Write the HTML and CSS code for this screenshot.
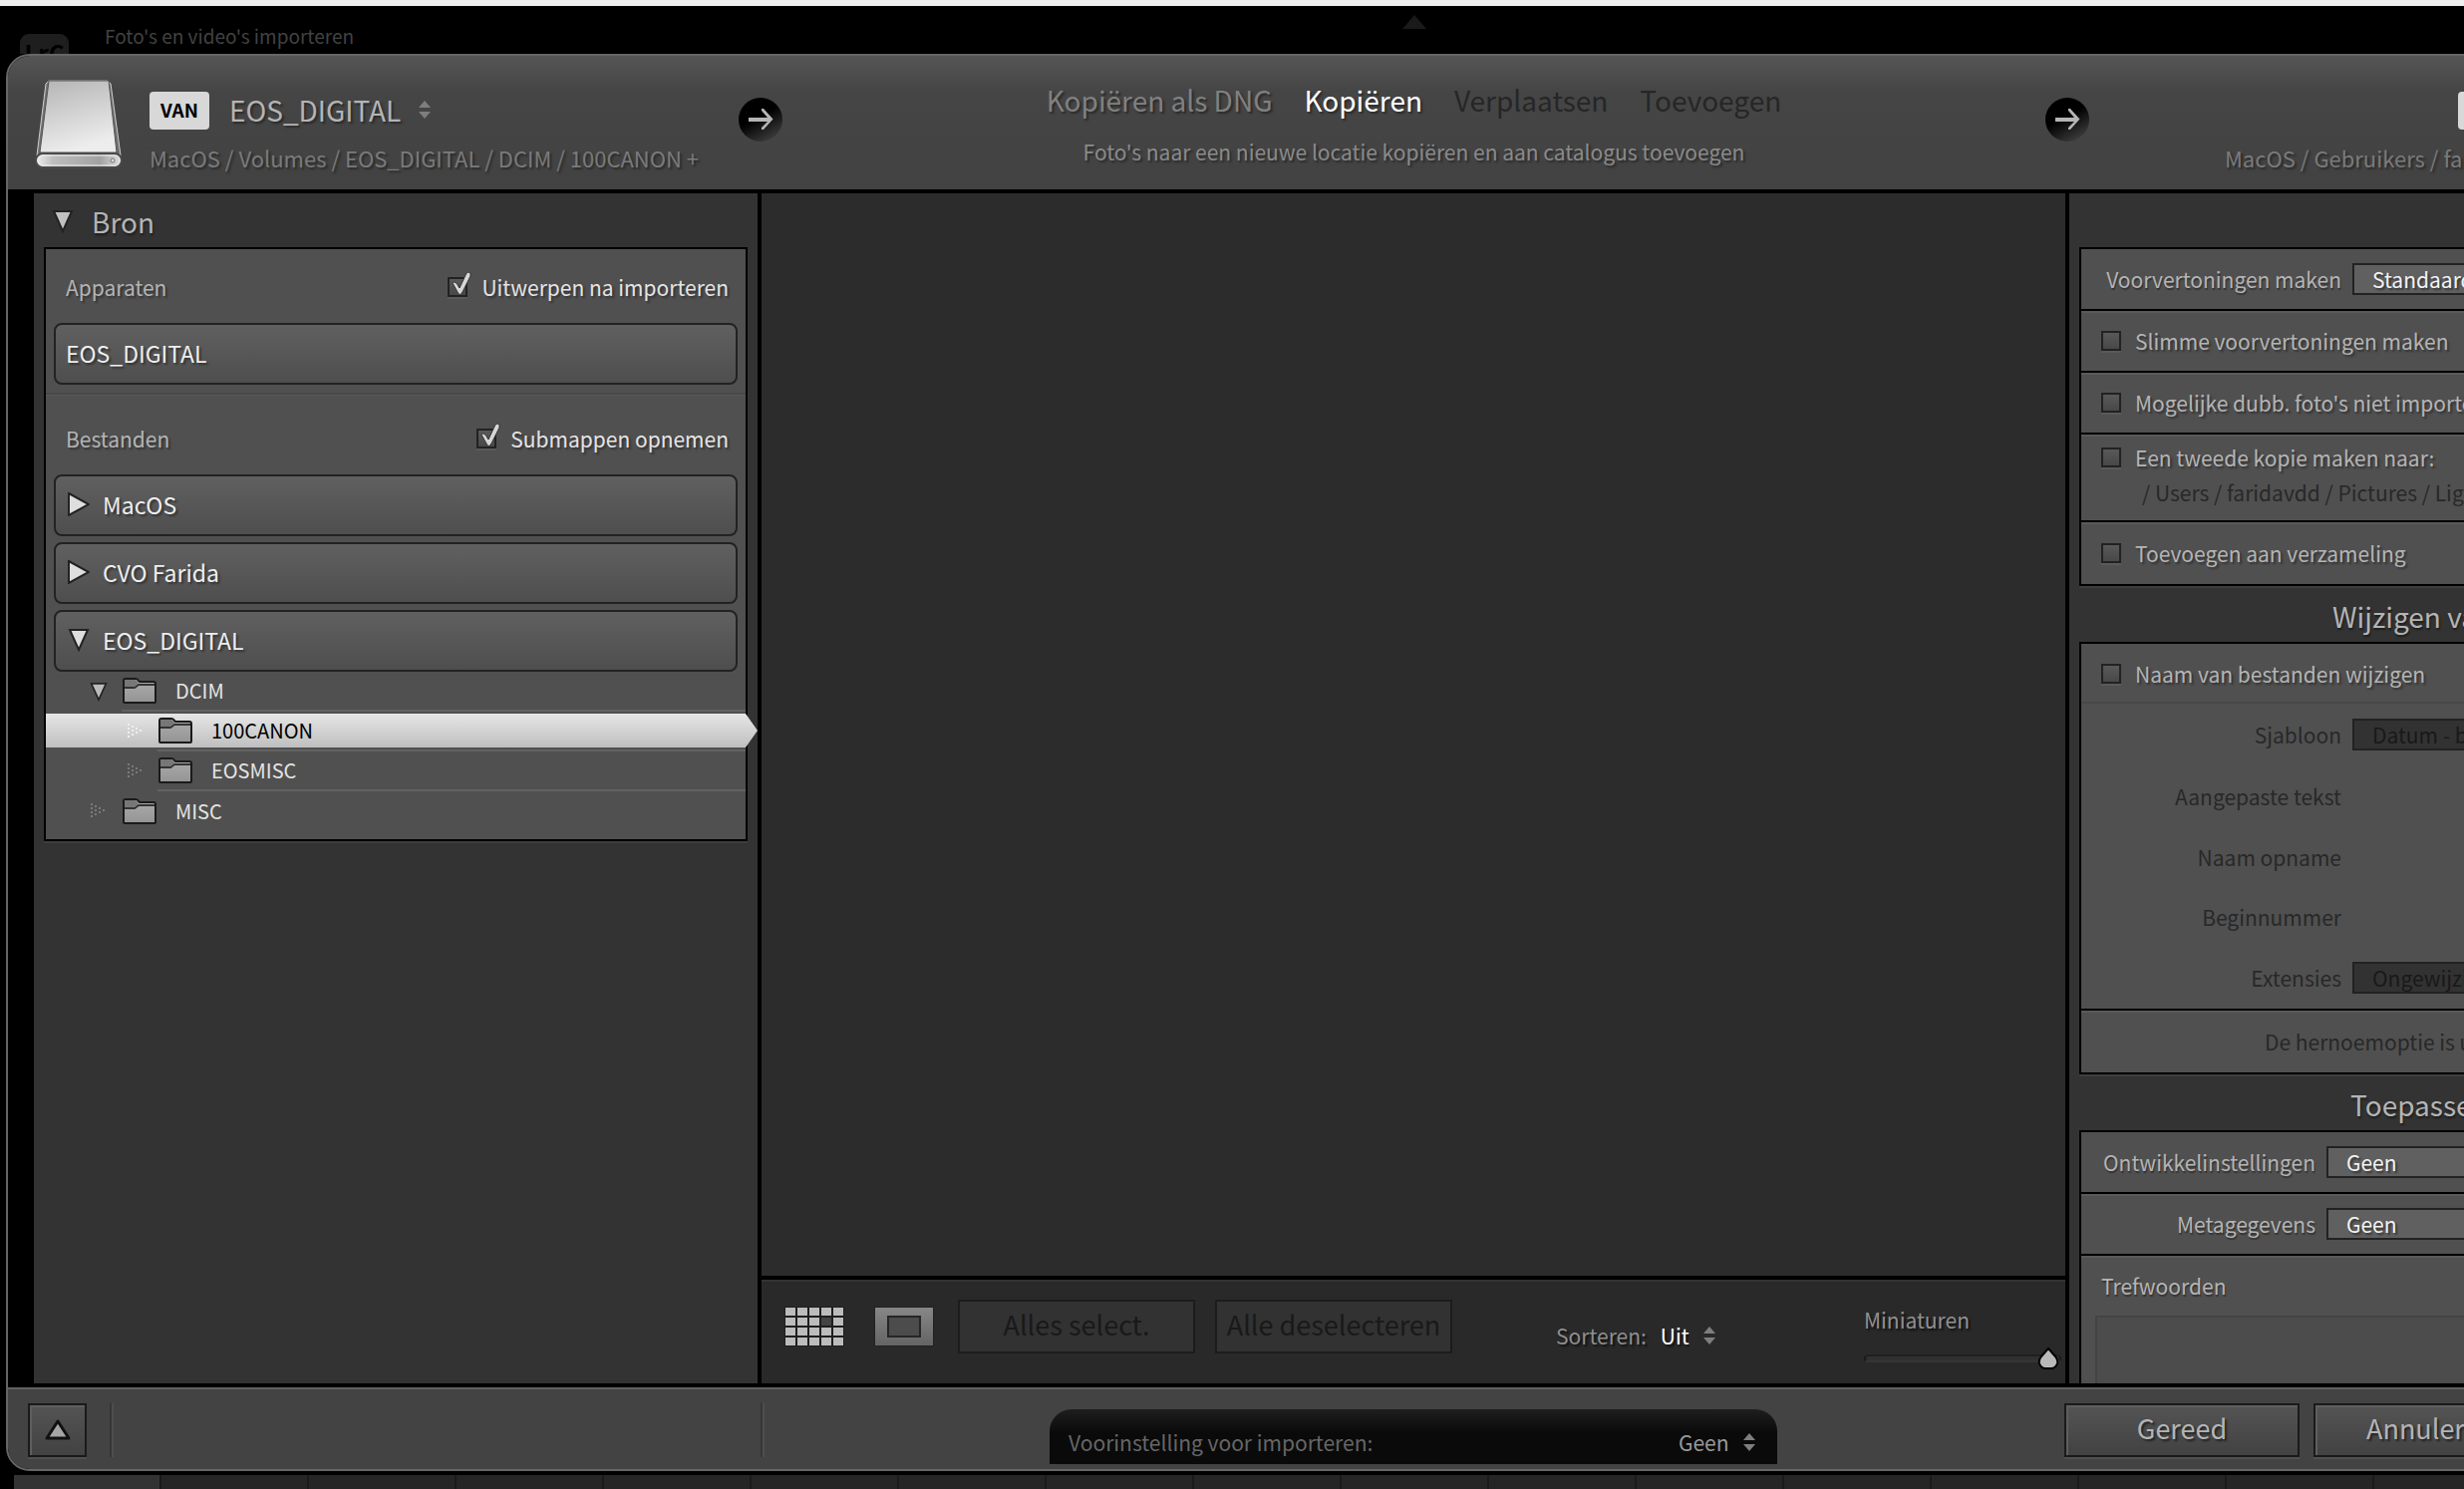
FILE: index.html
```html
<!DOCTYPE html>
<html lang="nl">
<head>
<meta charset="utf-8">
<meta name="viewport" content="width=device-width, initial-scale=1">
<title>Foto's en video's importeren</title>
<link rel="stylesheet" href="styles.css">
</head>
<body>
<svg class="defs" aria-hidden="true">
  <defs>
    <linearGradient id="driveTop" x1="0" y1="0" x2="0.3" y2="1"><stop offset="0" stop-color="#b4b4b4"/><stop offset="1" stop-color="#ededed"/></linearGradient>
    <linearGradient id="driveFront" x1="0" y1="0" x2="1" y2="0"><stop offset="0" stop-color="#efefef"/><stop offset="0.2" stop-color="#bdbdbd"/><stop offset="0.75" stop-color="#a2a2a2"/><stop offset="1" stop-color="#e0e0e0"/></linearGradient>
    <linearGradient id="disc" x1="0.3" y1="0.2" x2="0.75" y2="1"><stop offset="0.3" stop-color="#000"/><stop offset="1" stop-color="#404040"/></linearGradient>
    <linearGradient id="folderFill" x1="0" y1="0" x2="0" y2="1"><stop offset="0" stop-color="#adadad"/><stop offset="1" stop-color="#949494"/></linearGradient>
    <linearGradient id="loupeFill" x1="0" y1="0" x2="0" y2="1"><stop offset="0" stop-color="#878787"/><stop offset="1" stop-color="#646464"/></linearGradient>
    <symbol id="updown" viewBox="0 0 12 18"><path d="M6 0l6 7H0zM6 18l6-7H0z"/></symbol>
    <symbol id="arrow" viewBox="0 0 44 44"><circle cx="22" cy="22" r="22" fill="url(#disc)"/><path d="M10 20h19l-6-7v-2l2 0 9.500 10.500-9.500 10.500h-2v-2l6-6H10z" fill="#b5b5b5"/></symbol>
    <symbol id="folder" viewBox="0 0 36 28"><path d="M2 25V4q0-2 2-2h10q2 0 3 2l1 1h14q2 0 2 2v18q0 1-1 1H3q-1 0-1-1z" fill="url(#folderFill)" stroke="#1a1a1a" stroke-width="2"/><path d="M3 11h10l4-3h16" fill="none" stroke="#333" stroke-width="2"/><path d="M3 10V4q0-1 1-1h9q2 0 3 2l1 2-5 3z" fill="#777"/></symbol>
    <symbol id="dots" viewBox="0 0 14 16"><path d="M0 0h2v2H0zM0 4h2v2H0zM0 8h2v2H0zM0 12h2v2H0zM4 2h2v2H4zM4 6h2v2H4zM4 10h2v2H4zM8 4h2v2H8zM8 8h2v2H8zM12 6h2v2h-2z"/></symbol>
    <symbol id="tick" viewBox="0 0 20 24"><path d="M1 11q1-2 4 0l3 5L15 1q2-2 4 0v3L11 20q-3 5-5 0z" fill="#d6d6d6" stroke="#333"/></symbol>
    <symbol id="down" viewBox="0 0 22 24"><path d="M2 2h18L11 22z"/></symbol>
    <symbol id="right" viewBox="0 0 22 24"><path d="M1 1l20 11L1 23z"/></symbol>
  </defs>
</svg>

<div class="window-edge"></div>
<div class="titlebar">
  <div class="app-icon">LrC</div>
  <div class="window-title">Foto's en video's importeren</div>
  <svg class="panel-toggle" viewBox="0 0 24 14"><path d="M12 0l12 14H0z"/></svg>
</div>

<main class="dialog">
  <header class="header">
    <section class="source">
      <svg class="drive" viewBox="0 0 88 90">
        <path d="M11 4L14 1H73L76 4L86 76H2z" fill="#6f6f6f" stroke="#d0d0d0"/>
        <path d="M14 1H74L82 73H5z" fill="url(#driveTop)" stroke="#555"/>
        <rect x="1" y="74" width="86" height="14" rx="7" fill="url(#driveFront)" stroke="#4a4a4a" stroke-width="2"/>
        <rect x="3" y="76" width="82" height="10" rx="5" fill="none" stroke="#eee"/>
        <circle cx="78" cy="81" r="2" fill="#ddd" stroke="#777"/>
      </svg>
      <div class="source-text">
        <div class="source-name">
          <span class="badge">VAN</span>
          <button class="volume" type="button">EOS_DIGITAL<svg class="updown"><use href="#updown"/></svg></button>
        </div>
        <div class="path">MacOS / Volumes / EOS_DIGITAL / DCIM / 100CANON +</div>
      </div>
    </section>
    <svg class="arrow"><use href="#arrow"/></svg>
    <section class="method">
      <nav class="modes">
        <button type="button">Kopiëren als DNG</button>
        <button type="button" class="active">Kopiëren</button>
        <button type="button" disabled>Verplaatsen</button>
        <button type="button" disabled>Toevoegen</button>
      </nav>
      <p class="method-note">Foto's naar een nieuwe locatie kopiëren en aan catalogus toevoegen</p>
    </section>
    <svg class="arrow"><use href="#arrow"/></svg>
    <section class="destination">
      <span class="badge">NAAR</span>
      <div class="path">MacOS / Gebruikers / farida</div>
    </section>
  </header>

  <div class="columns">
    <aside class="left-panel">
      <button class="panel-heading" type="button"><svg class="tri"><use href="#down"/></svg>Bron</button>
      <div class="box source-box">
        <div class="group">
          <div class="group-head"><span>Apparaten</span>
            <label class="check bright"><span class="tickbox"><input type="checkbox" checked><svg><use href="#tick"/></svg></span>Uitwerpen na importeren</label>
          </div>
          <button class="volume-row" type="button">EOS_DIGITAL</button>
        </div>
        <div class="group files">
          <div class="group-head"><span>Bestanden</span>
            <label class="check bright"><span class="tickbox"><input type="checkbox" checked><svg><use href="#tick"/></svg></span>Submappen opnemen</label>
          </div>
          <button class="volume-row" type="button"><svg class="tri"><use href="#right"/></svg>MacOS</button>
          <button class="volume-row" type="button"><svg class="tri"><use href="#right"/></svg>CVO Farida</button>
          <button class="volume-row" type="button"><svg class="tri"><use href="#down"/></svg>EOS_DIGITAL</button>
        </div>
        <ul class="tree">
          <li class="node"><svg class="small-tri" viewBox="0 0 22 24"><use href="#down"/></svg><div class="node-body"><svg class="folder"><use href="#folder"/></svg>DCIM</div></li>
          <li class="node deep selected"><svg class="dots"><use href="#dots"/></svg><div class="node-body"><svg class="folder"><use href="#folder"/></svg>100CANON</div></li>
          <li class="node deep"><svg class="dots"><use href="#dots"/></svg><div class="node-body"><svg class="folder"><use href="#folder"/></svg>EOSMISC</div></li>
          <li class="node last"><svg class="dots"><use href="#dots"/></svg><div class="node-body"><svg class="folder"><use href="#folder"/></svg>MISC</div></li>
        </ul>
      </div>
    </aside>

    <section class="center">
      <div class="photos"></div>
      <div class="toolbar">
        <button class="view" type="button" aria-label="Raster">
          <svg viewBox="0 0 60 40"><rect width="60" height="40" fill="#1e1e1e"/><g fill="#bcbcbc"><path d="M1 1h10v8H1zM13 1h10v8H13zM25 1h10v8H25zM37 1h10v8H37zM49 1h10v8H49zM1 11h10v8H1zM13 11h10v8H13zM25 11h10v8H25zM49 11h10v8H49zM1 21h10v8H1zM13 21h10v8H13zM25 21h10v8H25zM37 21h10v8H37zM49 21h10v8H49zM1 31h10v8H1zM13 31h10v8H13zM25 31h10v8H25zM37 31h10v8H37zM49 31h10v8H49z"/></g><path d="M37 11h10v8H37z" fill="#444"/></svg>
        </button>
        <button class="view" type="button" aria-label="Loep">
          <svg viewBox="0 0 60 40"><rect width="60" height="40" fill="#222"/><rect x="1" y="1" width="58" height="38" fill="url(#loupeFill)"/><rect x="14" y="10" width="32" height="20" fill="#4c4c4c" stroke="#262626" stroke-width="2"/></svg>
        </button>
        <div class="tool-buttons">
          <button class="tool" type="button" disabled>Alles select.</button>
          <button class="tool" type="button" disabled>Alle deselecteren</button>
        </div>
        <div class="sort"><label for="sort">Sorteren:</label><select id="sort" class="plain white"><option>Uit</option></select><svg class="updown"><use href="#updown"/></svg></div>
        <div class="thumbs"><label for="thumbs">Miniaturen</label><input id="thumbs" type="range" value="100"></div>
      </div>
    </section>

    <aside class="right-panel">
      <div class="box">
        <div class="row"><label class="field-label" for="previews">Voorvertoningen maken</label><select id="previews" class="field"><option>Standaard</option></select></div>
        <div class="row"><label class="check"><input type="checkbox">Slimme voorvertoningen maken</label></div>
        <div class="row"><label class="check"><input type="checkbox">Mogelijke dubb. foto's niet importeren</label></div>
        <div class="row copy"><label class="check"><input type="checkbox">Een tweede kopie maken naar:</label><span class="copy-path">/ Users / faridavdd / Pictures / Lightroom</span></div>
        <div class="row"><label class="check"><input type="checkbox">Toevoegen aan verzameling</label></div>
      </div>
      <h2 class="section-title">Wijzigen van</h2>
      <div class="box">
        <div class="row soft"><label class="check"><input type="checkbox">Naam van bestanden wijzigen</label></div>
        <div class="rename">
          <label class="field-label" for="template">Sjabloon</label><select id="template" class="field" disabled><option>Datum - bestandsnaam</option></select>
          <span class="field-label">Aangepaste tekst</span>
          <span class="field-label">Naam opname</span>
          <span class="field-label">Beginnummer</span>
          <label class="field-label" for="ext">Extensies</label><select id="ext" class="field" disabled><option>Ongewijzigd</option></select>
        </div>
        <div class="row note">De hernoemoptie is uit</div>
      </div>
      <h2 class="section-title later">Toepassen</h2>
      <div class="box open narrow">
        <div class="row"><label class="field-label" for="develop">Ontwikkelinstellingen</label><select id="develop" class="field"><option>Geen</option></select></div>
        <div class="row"><label class="field-label" for="meta">Metagegevens</label><select id="meta" class="field"><option>Geen</option></select></div>
        <div class="keywords"><label for="keywords">Trefwoorden</label><textarea id="keywords"></textarea></div>
      </div>
    </aside>
  </div>

  <footer class="footer">
    <div class="footer-left">
      <div class="collapse-cell">
        <button class="push collapse" type="button" aria-label="Minder opties"><svg viewBox="0 0 28 24"><path d="M14 3L25 20H3z" fill="#a5a5a5" stroke="#111" stroke-width="3" stroke-linejoin="round"/></svg></button>
      </div>
    </div>
    <div class="preset"><label for="preset">Voorinstelling voor importeren:</label><span class="preset-value"><select id="preset" class="plain"><option>Geen</option></select><svg class="updown"><use href="#updown"/></svg></span></div>
    <div class="footer-right">
      <button class="push" type="button">Gereed</button>
      <button class="push" type="button">Annuleren</button>
    </div>
  </footer>
</main>
<div class="filmstrip"></div>
</body>
</html>
```

FILE: styles.css
```css
* { box-sizing: border-box; }

body {
  margin: 0;
  height: 100vh;
  display: flex;
  flex-direction: column;
  overflow: hidden;
  background: #000;
  color: #b4b4b4;
  font: 21px/28px "Noto Sans CJK SC", "Noto Sans", sans-serif;
}

button, select, textarea { font: inherit; color: inherit; }
button { border: 0; background: none; padding: 0; }
svg { display: block; flex: none; }
.defs { position: absolute; width: 0; height: 0; }

/* Window behind the dialog */
.window-edge { flex: none; height: 6px; background: #efefef; }
.titlebar {
  flex: none;
  height: 48px;
  padding-left: 20px;
  display: flex;
  overflow: hidden;
  position: relative;
}
.app-icon {
  width: 49px;
  height: 48px;
  margin: 28px 36px 0 0;
  border-radius: 9px;
  background: #1e1e1e;
  color: #000;
  font-size: 24px;
  font-weight: bold;
  text-align: center;
  line-height: 38px;
}
.window-title { padding-top: 16px; font-size: 19px; line-height: 28px; color: #424242; }
.panel-toggle {
  position: absolute;
  left: calc(50% + 171px);
  top: 9px;
  width: 24px;
  height: 14px;
  fill: #1a1a1a;
}
.filmstrip {
  flex: none;
  height: 14px;
  margin: 4px 0 0 14px;
  background:
    linear-gradient(#333, #333) 0 0 / 146px 100% no-repeat,
    repeating-linear-gradient(90deg, #252525 0 146px, #1a1a1a 146px 148px);
}

/* Dialog, running past the right edge of the window */
.dialog {
  flex: 1;
  min-height: 0;
  margin: 0 -358px 0 6px;
  display: flex;
  flex-direction: column;
  border: 2px solid #666;
  border-radius: 24px;
  overflow: hidden;
}
.header {
  flex: none;
  height: 134px;
  display: flex;
  background: linear-gradient(#555, #454545 36px, #424242);
  text-shadow: 2px 2px 2px #2a2a2a;
}
.source { width: 733px; display: flex; padding: 24px 0 0 27px; }
.drive { width: 88px; height: 90px; margin-right: 27px; }
.source-name { display: flex; align-items: center; gap: 20px; margin: 12px 0 14px; height: 38px; }
.badge {
  display: block;
  width: 60px;
  height: 38px;
  border-radius: 4px;
  background: #d8d8d8;
  color: #000;
  font-size: 19px;
  font-weight: bold;
  line-height: 36px;
  text-align: center;
  text-shadow: none;
}
.volume { display: flex; align-items: center; gap: 18px; padding-bottom: 2px; font-size: 28px; line-height: 36px; color: #b4b4b4; text-shadow: inherit; }
.updown { width: 12px; height: 18px; fill: #7e7e7e; }
.path { font-size: 22px; color: #7a7a7a; white-space: nowrap; }
.arrow { width: 44px; height: 44px; margin-top: 42px; }
.method { flex: 1; padding-top: 24px; text-align: center; }
.modes { display: flex; justify-content: center; gap: 32px; }
.modes button { font-size: 28px; line-height: 40px; color: #808080; text-shadow: inherit; }
.modes .active { color: #fff; }
.modes button:disabled { color: #262626; text-shadow: none; }
.method-note { margin: 18px 0 0; line-height: 28px; color: #8a8a8a; }
.destination { width: 732px; padding: 36px 0 0 136px; }
.destination .badge { width: 80px; margin: 0 0 14px 234px; }

.columns {
  flex: 1;
  min-height: 0;
  display: grid;
  grid-template-columns: 726px 1fr 726px;
  column-gap: 4px;
  padding: 4px 26px;
  background: #000;
}
.left-panel, .right-panel { background: #333; min-height: 0; }
.left-panel { padding: 0 10px; }
.panel-heading {
  display: flex;
  align-items: center;
  gap: 18px;
  height: 54px;
  padding: 2px 0 0 8px;
  font-size: 28px;
  text-shadow: 1px 2px 2px #1c1c1c;
}
.tri { width: 22px; height: 24px; fill: #c0c0c0; stroke: #222; stroke-width: 2px; }
.box { border: 2px solid #000; background: #505050; box-shadow: 0 2px #3e3e3e; }
.source-box { height: 596px; }
.group { padding: 18px 8px 8px; border-bottom: 2px solid #484848; box-shadow: 0 1px #585858; }
.group.files { padding: 24px 8px 0; border: 0; box-shadow: none; }
.group-head {
  display: flex;
  justify-content: space-between;
  align-items: center;
  height: 40px;
  margin-bottom: 16px;
  padding: 0 9px 0 12px;
  text-shadow: 2px 2px 2px #333;
}
.check { display: flex; align-items: center; gap: 14px; white-space: nowrap; text-shadow: 2px 2px 2px #333; }
.bright { color: #e4e4e4; }
input[type="checkbox"] {
  appearance: none;
  flex: none;
  width: 20px;
  height: 20px;
  margin: 0;
  border: 2px solid #222;
  background: linear-gradient(#595959, #484848);
  box-shadow: 0 2px #5a5a5a;
}
.tickbox { position: relative; display: block; width: 20px; height: 20px; }
.tickbox input { display: block; }
.tickbox svg { position: absolute; left: 4px; top: -5px; width: 20px; height: 24px; }
.volume-row {
  display: flex;
  align-items: center;
  gap: 13px;
  width: 100%;
  height: 62px;
  margin-bottom: 6px;
  padding: 0 12px 2px;
  border: 2px solid #222;
  border-radius: 8px;
  background: linear-gradient(#606060, #4e4e4e);
  color: #eee;
  font-size: 23px;
  text-shadow: 2px 2px 2px #333;
}
.volume-row:not(:has(svg)) { padding-left: 10px; }
.group .volume-row:last-child { margin-bottom: 0; }
.volume-row .tri { fill: #dedede; }

.tree { list-style: none; margin: 0; padding: 0; font-size: 20px; color: #e4e4e4; }
.node { display: flex; align-items: center; height: 40px; padding-left: 44px; position: relative; }
.node.deep { padding-left: 82px; }
.small-tri { width: 18px; height: 20px; margin-right: 14px; fill: #bbb; stroke: #222; stroke-width: 2px; }
.dots { width: 14px; height: 16px; margin: 0 17px 0 1px; fill: #7a7a7a; }
.deep .dots { margin: 0 16px 0 0; }
.node-body { flex: 1; display: flex; align-items: center; gap: 18px; height: 40px; border-bottom: 2px solid #626262; }
.last .node-body { border: 0; }
.folder { width: 36px; height: 28px; }
.selected { color: #000; isolation: isolate; }
.selected::before {
  content: "";
  position: absolute;
  z-index: -1;
  inset: 2px -12px 4px 0;
  background: linear-gradient(#e6e6e6, #bfbfbf);
  clip-path: polygon(0 0, calc(100% - 12px) 0, 100% 50%, calc(100% - 12px) 100%, 0 100%);
}
.selected .dots { fill: #efefef; }

.center { display: flex; flex-direction: column; gap: 4px; min-width: 0; }
.photos { flex: 1; background: #2c2c2c; }
.toolbar {
  height: 104px;
  display: flex;
  padding: 18px 4px 0 23px;
  border-top: 2px solid #333;
  background: #292929;
}
.view { width: 60px; height: 40px; margin: 7px 30px 0 0; }
.view svg { width: 60px; height: 40px; }
.view + .view { margin-right: 24px; }
.tool-buttons { display: flex; gap: 20px; flex: none; }
.tool { width: 238px; height: 54px; padding-bottom: 4px; border: 2px solid #1c1c1c; background: #323232; color: #191919; font-size: 27px; white-space: nowrap; }
.sort { display: flex; align-items: center; height: 28px; margin: 22px 0 0 104px; color: #8e8e8e; text-shadow: 2px 2px 2px #111; }
.plain { appearance: none; border: 0; padding: 0; background: none; color: #999; text-shadow: inherit; margin: 0 14px; }
.plain.white { color: #fff; }
.thumbs { width: 198px; margin-left: auto; padding-top: 6px; color: #909090; text-shadow: 2px 2px 2px #111; }
.thumbs label { display: block; }
input[type="range"] { appearance: none; display: block; width: 198px; height: 22px; margin: 14px 0 0; background: none; }
input[type="range"]::-webkit-slider-runnable-track { height: 8px; border: 2px solid #1a1a1a; border-top-color: #202020; border-bottom-color: #353535; border-radius: 4px; background: #303030; }
input[type="range"]::-webkit-slider-thumb {
  appearance: none;
  width: 22px;
  height: 22px;
  margin-top: -9px;
  background: url("data:image/svg+xml,%3Csvg xmlns='http://www.w3.org/2000/svg' viewBox='0 0 22 22'%3E%3Cpath d='M11 1L18 9Q21 13 20 16Q18 21 14 21H8Q4 21 2 16Q1 13 4 9Z' fill='%23b9b9b9' stroke='%23000' stroke-width='2'/%3E%3C/svg%3E");
}

.right-panel { padding: 54px 9px 0 10px; overflow: hidden; }
.row {
  display: flex;
  align-items: center;
  height: 62px;
  padding: 0 0 0 20px;
  border-bottom: 2px solid #000;
  box-shadow: inset 0 2px #5a5a5a;
}
.row:last-child { border: 0; }
.row:first-child { box-shadow: none; }
.field-label { width: 241px; text-align: right; white-space: nowrap; text-shadow: 1px 2px 1px #333; }
.field {
  appearance: none;
  flex: 1;
  height: 32px;
  margin-left: 11px;
  padding: 0 18px;
  border: 2px solid #222;
  border-radius: 0;
  background: #606060;
  color: #f2f2f2;
  line-height: 28px;
  text-shadow: 2px 2px 2px #333;
  opacity: 1;
}
.field:disabled { background: #323232; color: #191919; text-shadow: none; }
.copy { flex-direction: column; align-items: flex-start; height: 88px; padding-top: 9px; gap: 7px; }
.copy-path { padding-left: 41px; color: #282828; white-space: nowrap; }
.section-title { margin: 0; padding-left: 254px; height: 56px; font-size: 28px; line-height: 60px; font-weight: normal; text-shadow: 1px 2px 2px #1c1c1c; white-space: nowrap; }
.section-title.later { padding-left: 272px; }
.row.soft { height: 60px; padding-top: 2px; border-color: #484848; }
.rename {
  display: grid;
  grid-template-columns: 261px 1fr;
  grid-template-rows: 62px 62px 60px 60px 62px;
  align-items: center;
  border-bottom: 2px solid #000;
  color: #282828;
}
.rename .field-label { grid-column: 1; width: auto; text-shadow: none; }
.rename .field { grid-column: 2; }
.row.note { padding-left: 184px; color: #282828; }
.narrow .field-label { width: 215px; }
.keywords { padding: 16px 14px 0; box-shadow: inset 0 2px #5a5a5a; text-shadow: 1px 2px 1px #333; }
.keywords label { display: block; margin: 0 0 16px 6px; }
.keywords textarea { display: block; width: 100%; height: 120px; border: 2px solid #434343; background: #4c4c4c; resize: none; }

.footer {
  flex: none;
  height: 82px;
  display: flex;
  justify-content: space-between;
  border-top: 2px solid #606060;
  background: #434343;
}
.footer-left {
  width: 757px;
  height: 54px;
  margin-top: 14px;
  padding-left: 20px;
  border-right: 2px solid #363636;
  box-shadow: 2px 0 #4e4e4e;
}
.collapse-cell { width: 84px; height: 54px; border-right: 2px solid #363636; box-shadow: 2px 0 #4e4e4e; }
.push {
  width: 236px;
  height: 54px;
  padding-bottom: 4px;
  border: 2px solid #1a1a1a;
  background: linear-gradient(#545454, #424242);
  box-shadow: inset 2px 2px #5e5e5e, 0 2px #505050;
  font-size: 27px;
  text-shadow: 2px 2px 2px #222;
}
.collapse { display: grid; place-items: center; width: 59px; padding: 0; }
.collapse svg { width: 28px; height: 24px; }
.preset {
  width: 730px;
  height: 55px;
  margin-top: 20px;
  padding: 11px 22px 0 19px;
  display: flex;
  justify-content: space-between;
  align-items: center;
  border-radius: 22px 22px 0 0;
  background: linear-gradient(#1e1e1e, #0a0a0a 24px);
  color: #666;
}
.preset-value { display: flex; align-items: center; }
.footer-right { display: flex; gap: 14px; width: 757px; padding-top: 14px; }
```
